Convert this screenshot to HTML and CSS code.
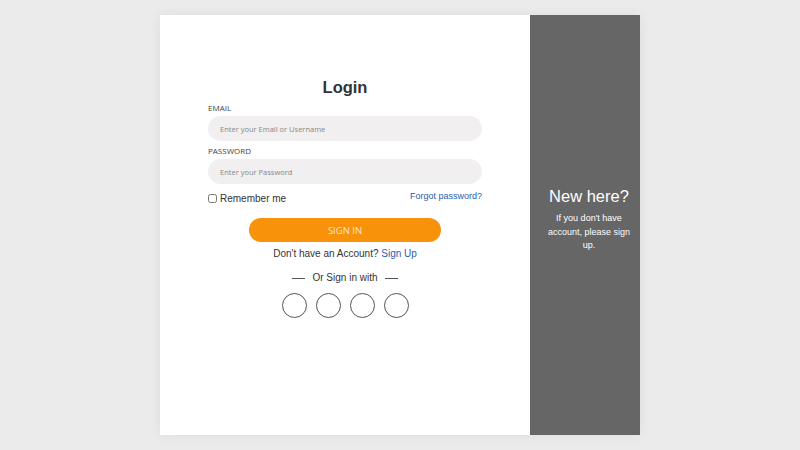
FILE: index.html
```html
<!DOCTYPE html>
<html lang="en">
<head>
    <meta charset="UTF-8">
    <meta name="viewport" content="width=device-width, initial-scale=1.0">
    <title>Login</title>
    <link rel="stylesheet" href="styles.css">
</head>
<body>
    <div class="card">
        <div class="login-pane">
            <form class="login-form">
                <h1>Login</h1>
                <label for="email">EMAIL</label>
                <input type="text" id="email" placeholder="Enter your Email or Username">
                <label for="password">PASSWORD</label>
                <input type="password" id="password" placeholder="Enter your Password">

                <div class="options-row">
                    <label class="remember"><input type="checkbox"> Remember me</label>
                    <a href="#" class="forgot">Forgot password?</a>
                </div>

                <button type="button" class="sign-in">SIGN IN</button>

                <p class="signup-text">Don't have an Account? <a href="#">Sign Up</a></p>

                <div class="divider"><span class="line"></span>Or Sign in with<span class="line"></span></div>

                <div class="socials">
                    <span class="social"></span>
                    <span class="social"></span>
                    <span class="social"></span>
                    <span class="social"></span>
                </div>
            </form>
        </div>
        <div class="side-pane">
            <h2>New here?</h2>
            <p>If you don't have account, please sign up.</p>
        </div>
    </div>
</body>
</html>
```

FILE: styles.css
```css
/* Estilos generales */
body, html {
    margin: 0;
    padding: 0;
    height: 100%;
}

body {
    background-color: #ebebeb;
    font-family: "Liberation Sans", Arial, sans-serif;
    color: #333;
    display: flex;
    justify-content: center;
    padding-top: 15px;
    box-sizing: border-box;
}

.card {
    display: flex;
    width: 480px;
    height: 420px;
    background-color: #fff;
    box-shadow: 0 0 12px rgba(0, 0, 0, 0.06);
}

.login-pane {
    width: 370px;
    padding: 61px 48px 0;
    box-sizing: border-box;
}

.login-form {
    display: flex;
    flex-direction: column;
}

.login-form h1 {
    margin: 0 0 4px;
    font-size: 16.5px;
    line-height: 22px;
    text-align: center;
    color: #333;
}

.login-form > label {
    font-family: "Open Sans", sans-serif;
    font-size: 8px;
    line-height: 11px;
    color: #444;
    margin-bottom: 3px;
}

.login-form > input {
    height: 25px;
    border: none;
    border-radius: 13px;
    background-color: #f1eff0;
    padding: 0 12px;
    font-family: "Open Sans", sans-serif;
    font-size: 7.5px;
    margin-bottom: 4px;
    outline: none;
}

.login-form > input::placeholder {
    color: #888;
}

.options-row {
    display: flex;
    justify-content: space-between;
    align-items: flex-start;
    margin-top: 2px;
    height: 28px;
}

.remember {
    display: flex;
    align-items: center;
    font-size: 10px;
    color: #333;
    margin-top: 3px;
}

.remember input {
    margin: 0 3px 0 0;
    width: 9px;
    height: 9px;
}

.forgot {
    font-size: 9px;
    color: #2a5db0;
    text-decoration: none;
    margin-top: 1px;
}

.sign-in {
    align-self: center;
    width: 192px;
    height: 24px;
    border: none;
    border-radius: 12px;
    background-color: #f7920a;
    color: #fde6c6;
    font-family: "Open Sans", sans-serif;
    font-size: 9.5px;
    cursor: pointer;
}

.signup-text {
    margin: 5px 0 0;
    font-size: 10px;
    line-height: 14px;
    text-align: center;
}

.signup-text a {
    color: #2a5db0;
    text-decoration: none;
}

.divider {
    display: flex;
    justify-content: center;
    align-items: center;
    margin-top: 10px;
    font-size: 10px;
    line-height: 14px;
}

.divider .line {
    width: 13px;
    height: 1px;
    background-color: #555;
    margin: 0 7px;
}

.socials {
    display: flex;
    justify-content: center;
    gap: 9px;
    margin-top: 8px;
}

.social {
    width: 23px;
    height: 23px;
    border: 1px solid #555;
    border-radius: 50%;
}

.side-pane {
    width: 110px;
    background-color: #666;
    color: #fff;
    display: flex;
    flex-direction: column;
    justify-content: center;
    align-items: center;
    text-align: center;
    padding: 0 0 12px 8px;
    box-sizing: border-box;
}

.side-pane h2 {
    margin: 0 0 5px;
    font-size: 16.5px;
    font-weight: normal;
    line-height: 22px;
    white-space: nowrap;
}

.side-pane p {
    margin: 0;
    padding: 0 8px;
    font-size: 9px;
    line-height: 13.5px;
}
```
